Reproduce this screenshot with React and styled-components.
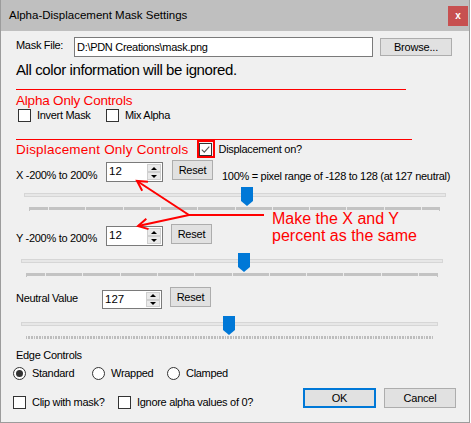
import React from 'react'
import styled, { createGlobalStyle } from 'styled-components'

const GlobalStyle = createGlobalStyle`
  html, body {
    margin: 0;
    padding: 0;
    background: #ffffff;
  }
  body {
    font-family: "Liberation Sans", Arial, sans-serif;
    font-size: 11px;
    color: #000;
  }
`

const Window = styled.div`
  position: relative;
  width: 470px;
  height: 423px;
  box-sizing: border-box;
  border: 1px solid #9c9c9c;
  border-top: none;
  background: #f0f0f0;
  display: flex;
  flex-direction: column;
  overflow: hidden;
`

const TitleBar = styled.div`
  height: 31px;
  margin: 0 -1px;
  background: #bfbfbf;
  display: flex;
  align-items: center;
  padding-left: 9px;
  font-size: 11.5px;
  color: #000;
`

const TitleText = styled.div`
  flex: 1;
  margin-top: -1px;
`

const CloseBtn = styled.div`
  width: 20px;
  height: 20px;
  margin-right: 2px;
  background: #c75050;
  color: #fff;
  font-weight: bold;
  font-size: 10px;
  display: flex;
  align-items: center;
  justify-content: center;
`

const Content = styled.div`
  padding: 0 13px 0 15px;
  display: flex;
  flex-direction: column;
`

const Row = styled.div`
  display: flex;
  align-items: ${p => p.$align || 'flex-start'};
  margin-top: ${p => p.$mt || 0}px;
  height: ${p => p.$h}px;
`

const Text = styled.div`
  font-size: 11px;
  line-height: 13px;
  letter-spacing: -0.3px;
  white-space: nowrap;
  margin-top: ${p => p.$mt || 0}px;
  margin-left: ${p => p.$ml || 0}px;
  width: ${p => (p.$w ? `${p.$w}px` : 'auto')};
  flex-shrink: 0;
`

const PathInput = styled.div`
  width: 299px;
  height: 20px;
  box-sizing: border-box;
  border: 1px solid #7a7a7a;
  background: #fff;
  padding-left: 2px;
  font-size: 11px;
  letter-spacing: -0.3px;
  line-height: 18px;
`

const Button = styled.div`
  width: ${p => p.$w}px;
  height: ${p => p.$h || 20}px;
  margin-top: ${p => p.$mt || 0}px;
  margin-left: ${p => p.$ml || 0}px;
  box-sizing: border-box;
  border: ${p => (p.$default ? '2px solid #0078d7' : '1px solid #adadad')};
  background: #e1e1e1;
  display: flex;
  align-items: center;
  justify-content: center;
  font-size: 11px;
  letter-spacing: -0.2px;
  flex-shrink: 0;
`

const InfoText = styled.div`
  margin-top: 4px;
  font-size: 15px;
  letter-spacing: -0.4px;
  line-height: 18px;
`

const RedRule = styled.div`
  margin-top: ${p => p.$mt}px;
  width: ${p => p.$w}px;
  height: 1px;
  background: #ff0000;
`

const Heading = styled.div`
  color: #ff0000;
  font-size: 13.5px;
  line-height: 15px;
  letter-spacing: ${p => p.$ls || 0}px;
  margin-top: ${p => p.$mt || 0}px;
  white-space: nowrap;
`

const CheckItem = styled.div`
  display: flex;
  align-items: center;
  gap: 6px;
  width: ${p => (p.$w ? `${p.$w}px` : 'auto')};
  margin-left: ${p => p.$ml || 0}px;
  margin-top: ${p => p.$mt || 0}px;
  flex-shrink: 0;
`

const Box = styled.div`
  width: 13px;
  height: 13px;
  box-sizing: border-box;
  border: 1px solid #333;
  background: #fff;
  flex-shrink: 0;
  display: flex;
  align-items: center;
  justify-content: center;
`

const Radio = styled.div`
  width: 13px;
  height: 13px;
  box-sizing: border-box;
  border: 1px solid #333;
  border-radius: 50%;
  background: #fff;
  flex-shrink: 0;
  display: flex;
  align-items: center;
  justify-content: center;
  &::after {
    content: '';
    display: ${p => (p.$on ? 'block' : 'none')};
    width: 7px;
    height: 7px;
    border-radius: 50%;
    background: #333;
  }
`

const Highlight = styled.div`
  width: 18px;
  height: 18px;
  box-sizing: border-box;
  border: 2px solid #ff0000;
  margin-left: ${p => p.$ml}px;
  display: flex;
  align-items: center;
  justify-content: center;
  flex-shrink: 0;
`

const UpDownBox = styled.div`
  width: ${p => p.$w}px;
  height: ${p => p.$h || 20}px;
  margin-top: ${p => p.$mt || 0}px;
  box-sizing: border-box;
  border: 1px solid #7a7a7a;
  background: #fff;
  display: flex;
  flex-shrink: 0;
`

const UpDownValue = styled.div`
  flex: 1;
  padding-left: 2px;
  font-size: 11.5px;
  line-height: 16px;
`

const Spin = styled.div`
  width: 14px;
  margin: 1px 1px 1px 0;
  display: flex;
  flex-direction: column;
`

const SpinBtn = styled.div`
  flex: 1;
  box-sizing: border-box;
  border: 1px solid #cfcfcf;
  background: #eaeaea;
  display: flex;
  align-items: center;
  justify-content: center;
  &::after {
    content: '';
    width: 0;
    height: 0;
    border-left: 3px solid transparent;
    border-right: 3px solid transparent;
    ${p => (p.$down ? 'border-top: 3px solid #000;' : 'border-bottom: 3px solid #000;')}
  }
`

const SliderWrap = styled.div`
  position: relative;
  width: ${p => p.$w}px;
  height: 24px;
  margin-left: ${p => p.$ml}px;
  margin-top: ${p => p.$mt}px;
  flex-shrink: 0;
`

const Track = styled.div`
  margin-top: 6px;
  height: 2px;
  border: 1px solid #d6d6d6;
  background: #e7e7e7;
`

const TickSvg = styled.svg`
  display: block;
  margin-top: 10px;
  margin-left: 5px;
`

const Thumb = styled.svg`
  position: absolute;
  top: 0;
`

const Annotation = styled.svg`
  position: absolute;
  left: 0;
  top: 0;
  pointer-events: none;
`

const Note = styled.div`
  position: absolute;
  left: 271px;
  top: 210px;
  color: #ff0000;
  font-size: 16px;
  line-height: 17px;
  white-space: nowrap;
`

const Spacer = styled.div`
  flex: 1;
`

const UpDown = ({ value, w, h, mt }) => (
  <UpDownBox $w={w} $h={h} $mt={mt}>
    <UpDownValue>{value}</UpDownValue>
    <Spin>
      <SpinBtn />
      <SpinBtn $down />
    </Spin>
  </UpDownBox>
)

const Ticks = ({ width, dense }) => {
  if (dense) {
    const marks = []
    for (let i = 0; i <= 255; i++) {
      marks.push(<rect key={i} x={Math.round((i * (width - 1)) / 255)} y="0" width="1" height="3" fill="#bdbdbd" />)
    }
    return (
      <TickSvg width={width} height="4">
        {marks}
      </TickSvg>
    )
  }
  const gaps = []
  for (let k = 0; k <= 10; k++) {
    gaps.push(<rect key={k} x={Math.round(19 + k * 37.3)} y="0" width="1" height="3" fill="#ededed" />)
  }
  return (
    <TickSvg width={width} height="4">
      <rect x="0" y="0" width={width} height="3" fill="#c3c3c3" />
      <rect x="0" y="3" width="1" height="1" fill="#c3c3c3" />
      <rect x={width - 1} y="3" width="1" height="1" fill="#c3c3c3" />
      {gaps}
    </TickSvg>
  )
}

const Slider = ({ ml, mt, width, tickWidth, value, min, max, dense }) => {
  const frac = (value - min) / (max - min)
  const left = 5 + frac * tickWidth - 6
  return (
    <SliderWrap $w={width} $ml={ml} $mt={mt}>
      <Track />
      <Ticks width={tickWidth} dense={dense} />
      <Thumb width="12" height="19" style={{ left: Math.round(left) }}>
        <path d="M0 0 H12 V14 L6 19 L0 14 Z" fill="#0078d7" />
      </Thumb>
    </SliderWrap>
  )
}

const arrowHead = (tx, ty, fx, fy) => {
  const a = Math.atan2(fy - ty, fx - tx)
  const len = 11
  const s = 0.5
  const p1 = [tx + len * Math.cos(a + s), ty + len * Math.sin(a + s)]
  const p2 = [tx + len * Math.cos(a - s), ty + len * Math.sin(a - s)]
  return `${p1[0]},${p1[1]} ${tx},${ty} ${p2[0]},${p2[1]}`
}

export default function App() {
  return (
    <>
      <GlobalStyle />
      <Window>
        <TitleBar>
          <TitleText>Alpha-Displacement Mask Settings</TitleText>
          <CloseBtn>x</CloseBtn>
        </TitleBar>
        <Content>
          <Row $mt={6} $h={20}>
            <Text $w={58} $mt={2}>Mask File:</Text>
            <PathInput>D:\PDN Creations\mask.png</PathInput>
            <Button $w={72} $h={18} $mt={1} $ml={7}>Browse...</Button>
          </Row>
          <InfoText>All color information will be ignored.</InfoText>
          <RedRule $mt={10} $w={390} />
          <Heading $mt={3} $ls={-0.2}>Alpha Only Controls</Heading>
          <Row $mt={1} $h={13} $align="center">
            <CheckItem $ml={2} $w={88}>
              <Box />
              <Text>Invert Mask</Text>
            </CheckItem>
            <CheckItem>
              <Box />
              <Text>Mix Alpha</Text>
            </CheckItem>
          </Row>
          <RedRule $mt={17} $w={396} />
          <Row $h={18} $align="center">
            <Heading $ls={0.2}>Displacement Only Controls</Heading>
            <Highlight $ml={8}>
              <Box>
                <svg width="11" height="11" viewBox="0 0 11 11">
                  <path d="M1.8 5.6 L4.3 8.1 L9.3 2.6" fill="none" stroke="#555" strokeWidth="1.1" />
                </svg>
              </Box>
            </Highlight>
            <Text $ml={4}>Displacement on?</Text>
          </Row>
          <Row $mt={2} $h={22}>
            <Text $w={90} $mt={9}>X -200% to 200%</Text>
            <UpDown value="12" w={57} mt={2} />
            <Button $w={41} $ml={9}>Reset</Button>
            <Text $ml={9} $mt={10}>100% = pixel range of -128 to 128 (at 127 neutral)</Text>
          </Row>
          <Slider ml={8} mt={5} width={422} tickWidth={411} value={12} min={-200} max={200} />
          <Row $mt={13} $h={22}>
            <Text $w={90} $mt={8}>Y -200% to 200%</Text>
            <UpDown value="12" w={57} mt={2} />
            <Button $w={41} $ml={8}>Reset</Button>
          </Row>
          <Slider ml={5} mt={7} width={422} tickWidth={412} value={12} min={-200} max={200} />
          <Row $mt={10} $h={21}>
            <Text $w={86} $mt={5}>Neutral Value</Text>
            <UpDown value="127" w={60} h={19} mt={3} />
            <Button $w={41} $ml={8}>Reset</Button>
          </Row>
          <Slider ml={5} mt={8} width={417} tickWidth={407} value={127} min={0} max={255} dense />
          <Text $mt={9}>Edge Controls</Text>
          <Row $mt={5} $h={13} $align="center">
            <CheckItem $ml={-3} $w={79}>
              <Radio $on />
              <Text>Standard</Text>
            </CheckItem>
            <CheckItem $w={75}>
              <Radio />
              <Text>Wrapped</Text>
            </CheckItem>
            <CheckItem>
              <Radio />
              <Text>Clamped</Text>
            </CheckItem>
          </Row>
          <Row $mt={8} $h={20}>
            <CheckItem $ml={-3} $w={105} $mt={8}>
              <Box />
              <Text>Clip with mask?</Text>
            </CheckItem>
            <CheckItem $mt={8}>
              <Box />
              <Text>Ignore alpha values of 0?</Text>
            </CheckItem>
            <Spacer />
            <Button $w={73} $default>OK</Button>
            <Button $w={72} $ml={8}>Cancel</Button>
          </Row>
        </Content>
        <Annotation width="471" height="423">
          <g stroke="#ff0000" strokeWidth="2" fill="none">
            <line x1="188" y1="215" x2="263" y2="215" />
            <line x1="188" y1="215" x2="136" y2="181" />
            <line x1="188" y1="215" x2="137" y2="226" />
            <polyline points={arrowHead(136, 181, 188, 215)} />
            <polyline points={arrowHead(137, 226, 188, 215)} />
          </g>
        </Annotation>
        <Note>
          Make the X and Y
          <br />
          percent as the same
        </Note>
      </Window>
    </>
  )
}
